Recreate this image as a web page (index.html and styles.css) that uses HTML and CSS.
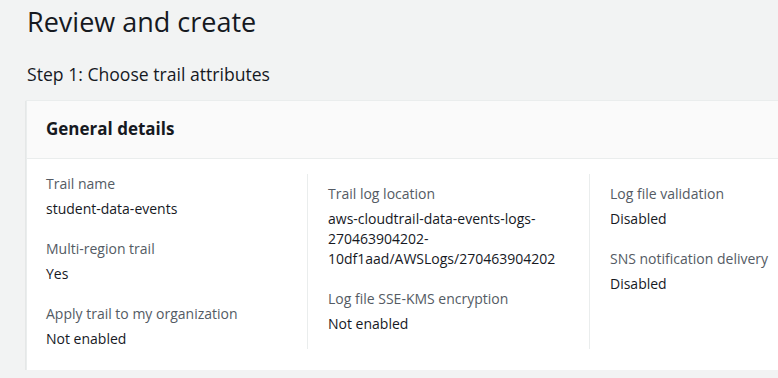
FILE: index.html
```html
<!DOCTYPE html>
<html lang="en">
<head>
    <meta charset="UTF-8">
    <title>Review and create</title>
    <link rel="stylesheet" href="styles.css">
</head>
<body>
    <div class="page">
        <h1 class="page-title">Review and create</h1>
        <h2 class="step-title">Step 1: Choose trail attributes</h2>

        <div class="card">
            <div class="card-header">
                <h3>General details</h3>
            </div>
            <div class="card-body">
                <div class="col first">
                    <div class="item">
                        <div class="label">Trail name</div>
                        <div class="value">student-data-events</div>
                    </div>
                    <div class="item">
                        <div class="label">Multi-region trail</div>
                        <div class="value">Yes</div>
                    </div>
                    <div class="item">
                        <div class="label">Apply trail to my organization</div>
                        <div class="value">Not enabled</div>
                    </div>
                </div>
                <div class="col">
                    <div class="item">
                        <div class="label">Trail log location</div>
                        <div class="value">aws-cloudtrail-data-events-logs-<br>270463904202-<br>10df1aad/AWSLogs/270463904202</div>
                    </div>
                    <div class="item">
                        <div class="label">Log file SSE-KMS encryption</div>
                        <div class="value">Not enabled</div>
                    </div>
                </div>
                <div class="col">
                    <div class="item">
                        <div class="label">Log file validation</div>
                        <div class="value">Disabled</div>
                    </div>
                    <div class="item">
                        <div class="label">SNS notification delivery</div>
                        <div class="value">Disabled</div>
                    </div>
                </div>
            </div>
        </div>
    </div>
</body>
</html>
```

FILE: styles.css
```css
body {
    font-family: 'Open Sans', sans-serif;
    background-color: #f2f3f3;
    color: #16191f;
    margin: 0;
    padding: 0;
    overflow: hidden;
}

.page {
    padding: 0 0 0 26px;
}

.page-title {
    font-size: 27px;
    font-weight: 400;
    line-height: 36px;
    margin: 4px 0 0 1px;
}

.step-title {
    font-size: 17.6px;
    font-weight: 400;
    line-height: 24px;
    margin: 22px 0 0 1px;
}

.card {
    width: 1000px;
    margin-top: 14px;
    background-color: #ffffff;
    border-top: 1px solid #eaeded;
    border-left: 1px solid #eaeded;
    box-shadow: 0 1px 1px 0 rgba(0, 28, 36, 0.3), 1px 1px 1px 0 rgba(0, 28, 36, 0.15);
}

.card-header {
    background-color: #fafafa;
    border-bottom: 1px solid #eaeded;
    padding: 17px 20px 18px 19px;
}

.card-header h3 {
    font-size: 17px;
    font-weight: 700;
    line-height: 22px;
    margin: 0;
}

.card-body {
    display: grid;
    grid-template-columns: 280px 282px 282px;
    padding: 15px 0 21px 0;
}

.col {
    padding: 10px 20px 0 20px;
    border-left: 1px solid #eaeded;
}

.col.first {
    border-left: none;
    padding: 0 20px 0 19px;
}

.item {
    margin-bottom: 20px;
}

.item:last-child {
    margin-bottom: 0;
}

.label {
    font-size: 14px;
    line-height: 20px;
    color: #545b64;
    margin-bottom: 5px;
}

.value {
    font-size: 14px;
    line-height: 20px;
}
```
